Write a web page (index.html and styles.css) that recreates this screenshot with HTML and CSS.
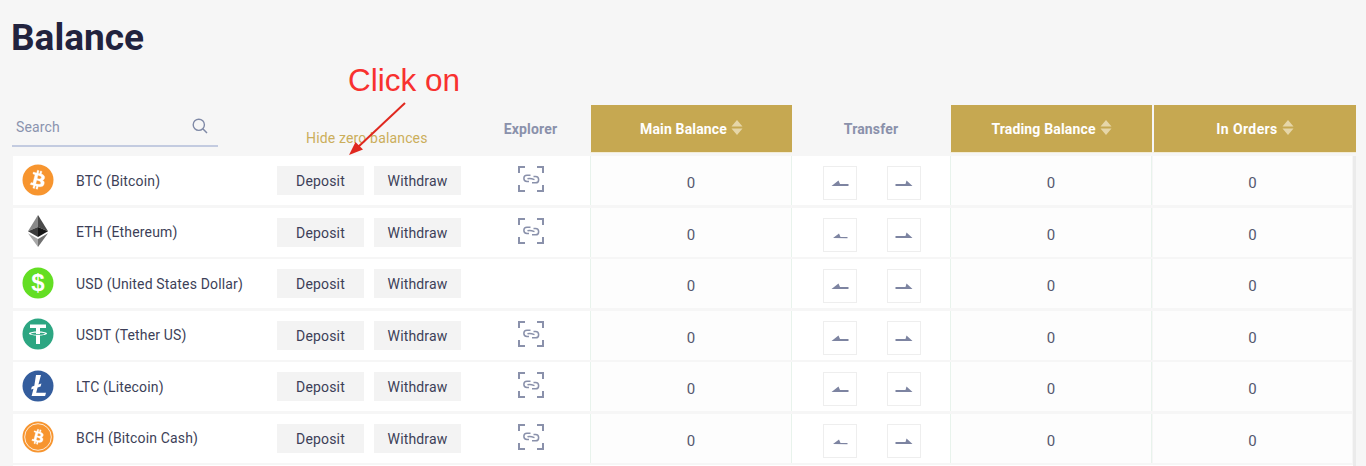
FILE: index.html
```html
<!DOCTYPE html>
<html lang="en">
<head>
<meta charset="utf-8">
<title>Balance</title>
<link rel="stylesheet" href="styles.css">
</head>
<body>
<svg class="defs" width="0" height="0" aria-hidden="true">
  <defs>
    <symbol id="link" viewBox="0 0 26 26">
      <path d="M1 7V1h6M19 1h6v6M25 19v6h-6M7 25H1v-6" fill="none" stroke="#8a91ab" stroke-width="2"/>
      <path d="M12.500 9.200H9a3 3 0 0 0 0 6.300h2M14 16.800h3.500a3 3 0 0 0 0-6.300h-2M9.500 12.800c2.500-1 4.500-.2 7 .8" fill="none" stroke="#8a91ab" stroke-width="1.500"/>
    </symbol>
    <symbol id="left" viewBox="0 0 18 8">
      <path d="M.5 7 7.500 1.500 9 5h8.500v2z" fill="#7d84a1"/>
    </symbol>
    <symbol id="left-thin" viewBox="0 0 18 8">
      <path d="M2 7 8 2.500 9.500 6h7v1.200z" fill="#7d84a1"/>
    </symbol>
    <symbol id="right" viewBox="0 0 18 8">
      <path d="M17.500 7 11.500 1.500 10.500 5H.5v2z" fill="#7d84a1"/>
    </symbol>
    <symbol id="sort" viewBox="0 0 12 15">
      <path d="M6 0l5.500 6.500H.5zM6 15 .5 8.500h11z" fill="#e6d6a8"/>
    </symbol>
    <symbol id="btc" viewBox="0 0 24 24">
      <path fill-rule="evenodd" fill="#fff" stroke="#fff" stroke-width=".3" d="M17.288 10.291c.24-1.590-.974-2.450-2.640-3.030l.540-2.153-1.315-.330-.525 2.107c-.345-.087-.705-.167-1.064-.250l.526-2.127-1.320-.330-.540 2.165c-.285-.067-.565-.132-.840-.200l-1.815-.450-.350 1.407s.975.225.955.236c.535.136.630.486.615.766l-1.477 5.920c-.075.166-.240.406-.614.314.015.020-.960-.240-.960-.240l-.660 1.510 1.710.426.930.242-.540 2.190 1.320.327.540-2.170c.360.100.705.190 1.050.273l-.510 2.154 1.320.330.545-2.190c2.240.427 3.930.257 4.640-1.774.570-1.637-.030-2.580-1.217-3.196.854-.193 1.500-.760 1.680-1.930h.010zm-3.010 4.220c-.404 1.640-3.157.750-4.050.530l.720-2.900c.896.230 3.757.670 3.330 2.370zm.410-4.240c-.370 1.490-2.662.735-3.405.550l.654-2.640c.744.180 3.137.524 2.750 2.084v.006z"/>
    </symbol>
  </defs>
</svg>

<main class="page">
  <h1 class="title">Balance</h1>

  <div class="note">
    <span class="note-text">Click on</span>
    <svg class="note-arrow" width="60" height="56" viewBox="0 0 60 56"><path d="M57 2 9 47" stroke="#e0281f" stroke-width="2" fill="none"/><path d="M1 54 15 48.500 7.500 41z" fill="#e0281f"/></svg>
  </div>

  <div class="cols head">
    <div class="search">
      <span class="search-text">Search</span>
      <svg class="search-icon" width="16" height="16" viewBox="0 0 16 16"><circle cx="6.800" cy="6.800" r="5.600" fill="none" stroke="#7f89a6" stroke-width="1.400"/><path d="M10.800 10.800 15 15" stroke="#7f89a6" stroke-width="1.500"/></svg>
    </div>
    <div class="hide-zero">Hide zero balances</div>
    <div class="head-plain">Explorer</div>
    <div class="head-gold">Main Balance <svg class="sort"><use href="#sort"/></svg></div>
    <div class="head-plain">Transfer</div>
    <div class="head-gold">Trading Balance <svg class="sort"><use href="#sort"/></svg></div>
    <div class="head-gold">In Orders <svg class="sort"><use href="#sort"/></svg></div>
  </div>

  <div class="rows">
    <div class="cols row">
      <div class="asset"><svg class="coin" viewBox="0 0 32 32"><circle cx="16" cy="16" r="15.500" fill="#f7952f"/><svg x="1" y="1" width="30" height="30"><use href="#btc"/></svg></svg><span>BTC (Bitcoin)</span></div>
      <div class="actions"><button class="btn">Deposit</button><button class="btn">Withdraw</button></div>
      <div class="explorer"><svg class="link"><use href="#link"/></svg></div>
      <div class="num">0</div>
      <div class="transfer"><span class="tbtn"><svg class="tarrow"><use href="#left"/></svg></span><span class="tbtn"><svg class="tarrow"><use href="#right"/></svg></span></div>
      <div class="num">0</div>
      <div class="num last">0</div>
    </div>
    <div class="cols row">
      <div class="asset"><svg class="coin" viewBox="0 0 32 32"><path d="M16 0 6 16.300 16 12z" fill="#8a8a8a"/><path d="M16 0 26 16.300 16 12z" fill="#4a4a4a"/><path d="M16 12 6 16.300 16 22z" fill="#3c3c3c"/><path d="M16 12 26 16.300 16 22z" fill="#161616"/><path d="M6 18.300 16 32V24z" fill="#a8a8a8"/><path d="M26 18.300 16 32V24z" fill="#707070"/></svg><span>ETH (Ethereum)</span></div>
      <div class="actions"><button class="btn">Deposit</button><button class="btn">Withdraw</button></div>
      <div class="explorer"><svg class="link"><use href="#link"/></svg></div>
      <div class="num">0</div>
      <div class="transfer"><span class="tbtn"><svg class="tarrow"><use href="#left-thin"/></svg></span><span class="tbtn"><svg class="tarrow"><use href="#right"/></svg></span></div>
      <div class="num">0</div>
      <div class="num last">0</div>
    </div>
    <div class="cols row">
      <div class="asset"><svg class="coin" viewBox="0 0 32 32"><circle cx="16" cy="16" r="15.500" fill="#63de23"/><text class="coin-text" x="16" y="24" text-anchor="middle">$</text></svg><span>USD (United States Dollar)</span></div>
      <div class="actions"><button class="btn">Deposit</button><button class="btn">Withdraw</button></div>
      <div class="explorer"></div>
      <div class="num">0</div>
      <div class="transfer"><span class="tbtn"><svg class="tarrow"><use href="#left"/></svg></span><span class="tbtn"><svg class="tarrow"><use href="#right"/></svg></span></div>
      <div class="num">0</div>
      <div class="num last">0</div>
    </div>
    <div class="cols row">
      <div class="asset"><svg class="coin" viewBox="0 0 32 32"><circle cx="16" cy="16" r="15.500" fill="#2da682"/><path d="M8 6.500h16V10h-6v3.600c3.500.2 7 .8 7 2s-3.500 1.800-7 2V26h-4v-8.400c-3.500-.2-7-.8-7-2s3.500-1.800 7-2V10H8zM14 14.800c-2.500.1-5 .4-5 .9s2.500 1 7 1 7-.5 7-1-2.500-.8-5-.9v1.100c-1.300.1-2.700.1-4 0z" fill="#fff" fill-rule="evenodd"/></svg><span>USDT (Tether US)</span></div>
      <div class="actions"><button class="btn">Deposit</button><button class="btn">Withdraw</button></div>
      <div class="explorer"><svg class="link"><use href="#link"/></svg></div>
      <div class="num">0</div>
      <div class="transfer"><span class="tbtn"><svg class="tarrow"><use href="#left"/></svg></span><span class="tbtn"><svg class="tarrow"><use href="#right"/></svg></span></div>
      <div class="num">0</div>
      <div class="num last">0</div>
    </div>
    <div class="cols row">
      <div class="asset"><svg class="coin" viewBox="0 0 32 32"><circle cx="16" cy="16" r="15.500" fill="#345d9d"/><path d="M14 5h5l-2.600 9.500 3-1.100-.8 3-3 1.100-1.400 5.300H24l-.9 3.200H9.600l1.900-7.300-2.400.9.700-2.800 2.500-1z" fill="#fff"/></svg><span>LTC (Litecoin)</span></div>
      <div class="actions"><button class="btn">Deposit</button><button class="btn">Withdraw</button></div>
      <div class="explorer"><svg class="link"><use href="#link"/></svg></div>
      <div class="num">0</div>
      <div class="transfer"><span class="tbtn"><svg class="tarrow"><use href="#left"/></svg></span><span class="tbtn"><svg class="tarrow"><use href="#right"/></svg></span></div>
      <div class="num">0</div>
      <div class="num last">0</div>
    </div>
    <div class="cols row">
      <div class="asset"><svg class="coin" viewBox="0 0 32 32"><circle cx="16" cy="16" r="15.500" fill="#f7952f"/><circle cx="16" cy="16" r="13.300" fill="none" stroke="#fff" stroke-width=".8"/><svg x="4" y="4" width="24" height="24"><use href="#btc"/></svg></svg><span>BCH (Bitcoin Cash)</span></div>
      <div class="actions"><button class="btn">Deposit</button><button class="btn">Withdraw</button></div>
      <div class="explorer"><svg class="link"><use href="#link"/></svg></div>
      <div class="num">0</div>
      <div class="transfer"><span class="tbtn"><svg class="tarrow"><use href="#left-thin"/></svg></span><span class="tbtn"><svg class="tarrow"><use href="#right"/></svg></span></div>
      <div class="num">0</div>
      <div class="num last">0</div>
    </div>
    <div class="row row-end"></div>
  </div>
</main>
</body>
</html>
```

FILE: styles.css
```css
* { box-sizing: border-box; }

html, body {
  margin: 0;
  height: 466px;
  overflow: hidden;
  background: #f6f6f6;
}

body {
  font-family: Roboto, "Noto Sans", sans-serif;
  color: #3d3f58;
  font-size: 14px;
  letter-spacing: .16px;
}

.defs { position: absolute; }

.page {
  position: relative;
  height: 466px;
  overflow: hidden;
  padding: 0 10px 0 12px;
}

.title {
  margin: 0;
  padding-top: 17px;
  height: 105px;
  font-size: 37px;
  line-height: 42px;
  font-weight: 700;
  letter-spacing: 0;
  color: #22233e;
  text-indent: -1px;
}

.note {
  position: absolute;
  left: 345px;
  top: 60px;
}

.note-text {
  display: block;
  font-family: "Liberation Sans", Arial, sans-serif;
  font-size: 31.500px;
  line-height: 40px;
  letter-spacing: 0;
  color: #f8312f;
  padding-left: 3px;
}

.note-arrow {
  position: absolute;
  left: 3px;
  top: 41px;
}

.cols {
  display: grid;
  grid-template-columns: 264px 195px 119px 202px 158px 202px 1fr;
}

.head {
  height: 48px;
  align-items: stretch;
}

.search {
  display: flex;
  align-items: center;
  justify-content: space-between;
  width: 206px;
  height: 42px;
  padding: 4px 10px 0 4px;
  border-bottom: 2px solid #c3cbe0;
  color: #8a93ae;
}

.search-icon { margin-top: -3px; }

.hide-zero {
  color: #cbae5b;
  padding-top: 25px;
  padding-left: 30px;
  white-space: nowrap;
}

.head-plain,
.head-gold {
  display: flex;
  align-items: center;
  justify-content: center;
  font-weight: 700;
  white-space: nowrap;
}

.head-plain { color: #8a91ab; }

.head-gold {
  background: #c6a851;
  color: #fff;
  border-left: 1px solid #f6f6f6;
  border-bottom: 1px solid #f3ecd5;
  gap: 4px;
}

.head-gold:last-child {
  border-left-width: 2px;
  letter-spacing: .4px;
}

.sort {
  width: 12px;
  height: 15px;
  margin-top: -3px;
}

.rows {
  display: flex;
  flex-direction: column;
  gap: 2.500px;
  margin-top: 3px;
  margin-left: 1px;
  border-right: 3px solid #ebebeb;
}

.rows .cols {
  grid-template-columns: 264px 195px 118px 202px 158px 202px 1fr;
}

.row {
  height: 49px;
  flex: none;
  background: #fff;
  align-items: stretch;
}

.row-end { height: 1px; }

.asset {
  display: flex;
  align-items: center;
  gap: 22px;
  padding: 0 0 2px 9px;
  white-space: nowrap;
}

.asset span { margin-top: 2px; }

.coin {
  width: 32px;
  height: 32px;
  flex: none;
}

.coin-text {
  font-family: "Liberation Sans", Arial, sans-serif;
  font-size: 24px;
  font-weight: 700;
  fill: #fff;
}

.actions {
  display: flex;
  gap: 10px;
  padding-top: 10px;
}

.btn {
  width: 87px;
  height: 29px;
  padding: 1px 0 0;
  border: 0;
  background: #f3f3f3;
  color: #3d3f58;
  font: inherit;
  letter-spacing: inherit;
}

.explorer {
  display: flex;
  justify-content: center;
  padding-top: 10px;
}

.link {
  width: 26px;
  height: 26px;
}

.num {
  display: flex;
  align-items: center;
  justify-content: center;
  padding-top: 5px;
  font-size: 15px;
  color: #55586f;
  background: #fdfdfd;
  border-left: 1px solid #e8f3ec;
  border-right: 1px solid #e8f3ec;
}

.num.last {
  border-color: #f6f6f6;
}

.transfer {
  display: flex;
  justify-content: center;
  gap: 30px;
  padding: 10px 0 0 2px;
}

.tbtn {
  display: flex;
  align-items: center;
  justify-content: center;
  width: 34px;
  height: 34px;
  border: 1px solid #eeeeee;
}

.tarrow {
  width: 18px;
  height: 8px;
}
```
